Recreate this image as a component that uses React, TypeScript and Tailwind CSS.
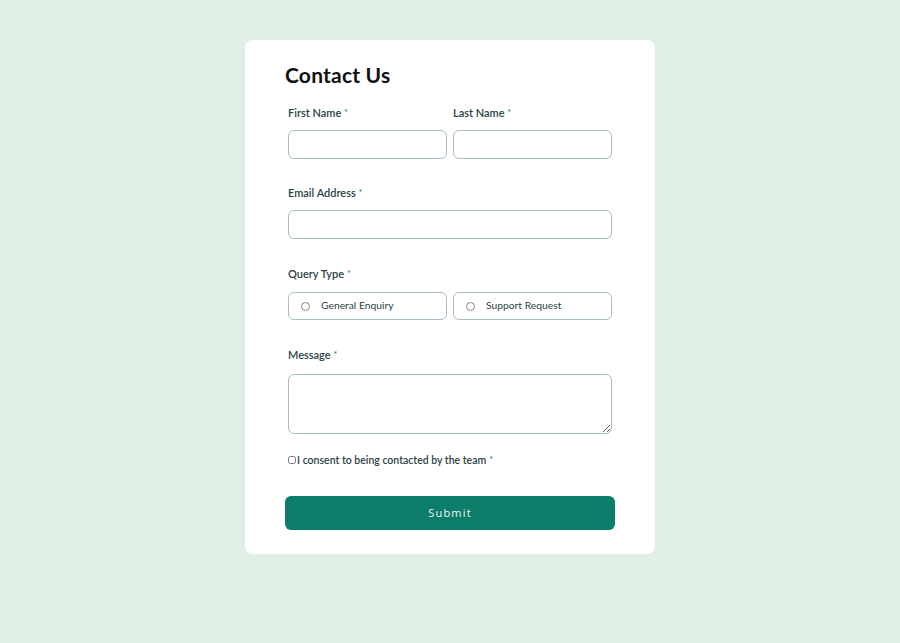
import { useState } from 'react';

const font = { fontFamily: 'Lato, "Noto Sans", sans-serif' };

function Label({ children }: { children: React.ReactNode }) {
  return (
    <label className="block text-[11px] leading-[14px] font-semibold text-[#2a4244]">
      {children} <span className="text-[#0c7d69] font-normal text-[9px] align-top">*</span>
    </label>
  );
}

export default function App() {
  const [query, setQuery] = useState('');

  return (
    <div className="min-h-screen bg-[#dfefe6] flex justify-center pt-[40px]" style={font}>
      <div className="w-[410px] h-[514px] bg-white rounded-[8px] px-[40px] pt-[22px]">
        <h1 className="text-[21px] leading-[26px] font-bold text-[#111] tracking-[0.2px]">Contact Us</h1>

        <form className="mt-[18px]" onSubmit={(e) => e.preventDefault()}>
          <div className="px-[3px]">
            <div className="flex gap-[6px]">
              <div className="flex-1">
                <Label>First Name</Label>
                <input className="mt-[10px] block w-full h-[29px] rounded-[6px] border border-[#a9bcbe] outline-none" />
              </div>
              <div className="flex-1">
                <Label>Last Name</Label>
                <input className="mt-[10px] block w-full h-[29px] rounded-[6px] border border-[#a9bcbe] outline-none" />
              </div>
            </div>

            <div className="mt-[27px]">
              <Label>Email Address</Label>
              <input className="mt-[10px] block w-full h-[29px] rounded-[6px] border border-[#a9bcbe] outline-none" />
            </div>

            <div className="mt-[28px]">
              <Label>Query Type</Label>
              <div className="mt-[11px] flex gap-[6px]">
                {['General Enquiry', 'Support Request'].map((q) => (
                  <label
                    key={q}
                    className="flex-1 h-[28px] rounded-[6px] border border-[#a9bcbe] flex items-center pl-[12px] gap-[11px] text-[10.3px] text-[#2a4244] cursor-pointer"
                  >
                    <span className="w-[9px] h-[9px] rounded-full border border-[#888] flex items-center justify-center">
                      {query === q && <span className="w-[5px] h-[5px] rounded-full bg-[#0c7d69]" />}
                    </span>
                    <input type="radio" name="query" className="hidden" onChange={() => setQuery(q)} />
                    {q}
                  </label>
                ))}
              </div>
            </div>

            <div className="mt-[28px]">
              <Label>Message</Label>
              <textarea className="mt-[12px] block w-full h-[60px] rounded-[6px] border border-[#a9bcbe] outline-none" />
            </div>

            <div className="mt-[19px] flex items-center text-[10.5px] leading-[14px] font-semibold text-[#2a4244]">
              <input type="checkbox" className="w-[8px] h-[8px] m-0 mr-[1px]" />
              I consent to being contacted by the team
              <span className="ml-[3px] text-[#0c7d69] font-normal text-[9px] self-start">*</span>
            </div>
          </div>

          <button
            type="submit"
            className="mt-[29px] w-full h-[34px] rounded-[6px] bg-[#0c7d69] text-[#f0f5f4] text-[11px] tracking-[1.2px]"
            style={{ fontFamily: '"Open Sans", sans-serif' }}
          >
            Submit
          </button>
        </form>
      </div>
    </div>
  );
}
